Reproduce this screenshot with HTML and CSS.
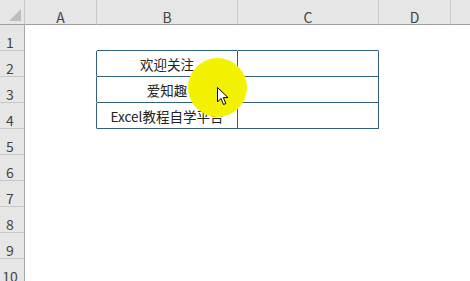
FILE: index.html
```html
<!DOCTYPE html>
<html>
    <head>
        <title>Excel</title>
        <link rel="stylesheet" href="styles.css">
    </head>
    <body>
        <div class="sheet">
            <div class="hd corner"><span class="tri"></span></div>
            <div class="hd col">A</div>
            <div class="hd col">B</div>
            <div class="hd col">C</div>
            <div class="hd col">D</div>
            <div class="hd col last"></div>

            <div class="hd row">1</div>
            <div class="cell"></div>
            <div class="cell tb-bottom"></div>
            <div class="cell tb-bottom"></div>
            <div class="cell"></div>
            <div class="cell"></div>

            <div class="hd row">2</div>
            <div class="cell tb-right"></div>
            <div class="cell tb">欢迎关注</div>
            <div class="cell tb"></div>
            <div class="cell"></div>
            <div class="cell"></div>

            <div class="hd row">3</div>
            <div class="cell tb-right"></div>
            <div class="cell tb">爱知趣</div>
            <div class="cell tb"></div>
            <div class="cell"></div>
            <div class="cell"></div>

            <div class="hd row">4</div>
            <div class="cell tb-right"></div>
            <div class="cell tb">Excel教程自学平台</div>
            <div class="cell tb"></div>
            <div class="cell"></div>
            <div class="cell"></div>

            <div class="hd row">5</div><div class="cell"></div><div class="cell"></div><div class="cell"></div><div class="cell"></div><div class="cell"></div>
            <div class="hd row">6</div><div class="cell"></div><div class="cell"></div><div class="cell"></div><div class="cell"></div><div class="cell"></div>
            <div class="hd row">7</div><div class="cell"></div><div class="cell"></div><div class="cell"></div><div class="cell"></div><div class="cell"></div>
            <div class="hd row">8</div><div class="cell"></div><div class="cell"></div><div class="cell"></div><div class="cell"></div><div class="cell"></div>
            <div class="hd row">9</div><div class="cell"></div><div class="cell"></div><div class="cell"></div><div class="cell"></div><div class="cell"></div>
            <div class="hd row">10</div><div class="cell"></div><div class="cell"></div><div class="cell"></div><div class="cell"></div><div class="cell"></div>

            <div class="spot"></div>
            <svg class="pointer" width="14" height="20" viewBox="0 0 14 20">
                <path d="M1.5 1.5 L1.5 16 L5 12.5 L7.5 18.5 L9.8 17.5 L7.3 11.6 L12 11.6 Z" fill="#fff" stroke="#000" stroke-width="1" stroke-linejoin="miter"/>
            </svg>
        </div>
    </body>
</html>
```

FILE: styles.css
```css
body {
    margin: 0;
    padding: 0;
    background: #fff;
    font-family: "Noto Sans CJK SC", "Noto Sans", sans-serif;
    color: #222;
    overflow: hidden;
}

.sheet {
    position: relative;
    display: grid;
    grid-template-columns: 25px 72px 141px 141px 72px 1fr;
    grid-template-rows: 25px repeat(10, 26px);
    width: 470px;
}

.hd {
    box-sizing: border-box;
    background: #e6e6e6;
    color: #444;
    display: flex;
    align-items: center;
    justify-content: center;
}

.col {
    font-size: 14px;
    padding-top: 9px;
    border-right: 1px solid #c8c8c8;
    border-bottom: 1px solid #9e9e9e;
}

.col.last {
    border-right: none;
}

.corner {
    position: relative;
    border-right: 1px solid #c8c8c8;
    border-bottom: 1px solid #9e9e9e;
}

.tri {
    position: absolute;
    right: 3px;
    bottom: 3px;
    width: 0;
    height: 0;
    border-left: 12px solid transparent;
    border-bottom: 12px solid #bdbdbd;
}

.row {
    font-size: 14px;
    border-right: 1px solid #a8a8a8;
    border-bottom: 1px solid #c8c8c8;
    padding-top: 8px;
    padding-right: 4px;
}

.cell {
    box-sizing: border-box;
    border-right: 1px solid transparent;
    border-bottom: 1px solid transparent;
    font-size: 13.5px;
    display: flex;
    align-items: center;
    justify-content: center;
    white-space: nowrap;
    padding-top: 1px;
}

.tb {
    border-right-color: #2f5f7d;
    border-bottom-color: #2f5f7d;
}

.tb-bottom {
    border-bottom-color: #2f5f7d;
}

.tb-right {
    border-right-color: #2f5f7d;
}

.spot {
    position: absolute;
    left: 188px;
    top: 58px;
    width: 59px;
    height: 59px;
    border-radius: 50%;
    background: radial-gradient(circle, #f0f000 0%, #f2f200 60%, #f5f500 85%, rgba(245, 245, 60, 0.6) 100%);
}

.pointer {
    position: absolute;
    left: 216px;
    top: 86px;
}
```
